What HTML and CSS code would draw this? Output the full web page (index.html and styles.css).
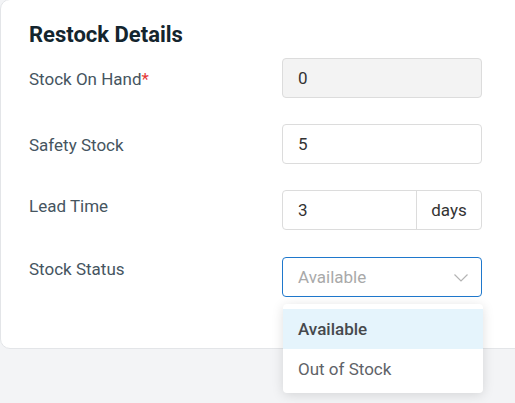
FILE: index.html
```html
<!DOCTYPE html>
<html lang="en">
<head>
<meta charset="utf-8">
<title>Restock Details</title>
<link rel="stylesheet" href="styles.css">
</head>
<body>
<section class="card">
  <h2 class="card-title">Restock Details</h2>
  <div class="form">
    <label class="label">Stock On Hand<span class="req">*</span></label>
    <div class="input input--disabled">0</div>

    <label class="label">Safety Stock</label>
    <div class="input">5</div>

    <label class="label label--mid">Lead Time</label>
    <div class="input-group">
      <div class="input-group__field">3</div>
      <div class="input-group__addon">days</div>
    </div>

    <label class="label label--top">Stock Status</label>
    <div class="select-wrap">
      <div class="select">
        <span class="placeholder">Available</span>
        <svg class="chevron" width="14" height="8" viewBox="0 0 14 8"><path d="M0.5 0.5 L7 7 L13.5 0.5" fill="none" stroke="#b4b4b4" stroke-width="1.2"/></svg>
      </div>
      <ul class="dropdown">
        <li class="dropdown__item dropdown__item--active">Available</li>
        <li class="dropdown__item">Out of Stock</li>
      </ul>
    </div>
  </div>
</section>
</body>
</html>
```
FILE: styles.css
```css
html, body {
  margin: 0;
  padding: 0;
}
body {
  background: #f3f4f6;
  font-family: Roboto, "Liberation Sans", sans-serif;
  overflow: hidden;
  width: 515px;
  height: 403px;
}
.card {
  box-sizing: border-box;
  width: 540px;
  height: 350px;
  margin-top: -1px;
  background: #fff;
  border: 1px solid #e3e5e8;
  border-radius: 10px;
  padding: 22px 0 0 28px;
}
.card-title {
  margin: 0;
  font-size: 22px;
  line-height: 25px;
  font-weight: 700;
  color: #14252e;
}
.form {
  margin-top: 11px;
  display: grid;
  grid-template-columns: 253px 200px;
  row-gap: 26px;
  align-items: start;
}
.label {
  font-size: 17px;
  line-height: 24px;
  color: #46555f;
  padding-top: 9px;
}
.label--mid { padding-top: 4px; }
.label--top { padding-top: 1px; }
.req { color: #e53935; }
.input {
  box-sizing: border-box;
  height: 40px;
  border: 1px solid #dcdcdc;
  border-radius: 4px;
  padding: 0 15px;
  font-size: 17px;
  line-height: 38px;
  color: #333;
  background: #fff;
}
.input--disabled {
  background: #f3f3f3;
}
.input-group {
  box-sizing: border-box;
  height: 40px;
  display: flex;
  border: 1px solid #dcdcdc;
  border-radius: 4px;
  font-size: 17px;
  line-height: 38px;
  color: #333;
}
.input-group__field {
  flex: 1;
  padding: 0 15px;
}
.input-group__addon {
  width: 64px;
  border-left: 1px solid #dcdcdc;
  text-align: center;
}
.select-wrap {
  position: relative;
  margin-top: 1px;
}
.select {
  box-sizing: border-box;
  height: 40px;
  border: 1px solid #1f78cc;
  border-radius: 4px;
  padding: 0 13px 0 15px;
  display: flex;
  align-items: center;
  justify-content: space-between;
  font-size: 17px;
  color: #a9a9a9;
}
.chevron { display: block; margin-top: 1px; }
.dropdown {
  position: absolute;
  top: 47px;
  left: 1px;
  width: 200px;
  margin: 0;
  padding: 5px 0 4px;
  list-style: none;
  background: #fff;
  border-radius: 4px;
  box-shadow: 0 2px 12px rgba(0, 0, 0, 0.13);
}
.dropdown__item {
  height: 40px;
  line-height: 40px;
  padding-left: 15px;
  font-size: 17px;
  color: #5f6368;
}
.dropdown__item--active {
  background: #e5f4fc;
  color: #46494d;
  font-weight: 500;
}
```
